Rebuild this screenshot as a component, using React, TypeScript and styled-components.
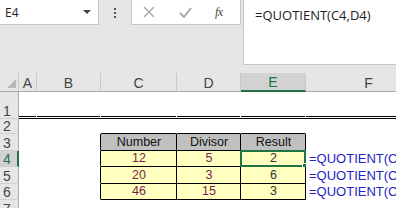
import React from 'react'
import styled, { createGlobalStyle } from 'styled-components'

const GlobalStyle = createGlobalStyle`
  html, body {
    margin: 0;
    padding: 0;
    overflow: hidden;
    background: #fff;
  }
  body {
    width: 396px;
    height: 208px;
    font-family: "Liberation Sans", Arial, sans-serif;
  }
`

const COLS = [
  { key: 'A', width: '18px' },
  { key: 'B', width: '64px' },
  { key: 'C', width: '76px' },
  { key: 'D', width: '64px' },
  { key: 'E', width: '65px' },
  { key: 'F', width: '1fr' },
]

const ROW_HEIGHTS = [27, 15, 17, 16, 17, 16, 17]

const MAROON = '#7a1f4c'
const TABLE = [
  ['Number', 'Divisor', 'Result'],
  ['12', '5', '2'],
  ['20', '3', '6'],
  ['46', '15', '3'],
]

// ---- toolbar ----
const Toolbar = styled.div`
  display: flex;
  align-items: flex-start;
  height: 73px;
  background: #e6e6e6;
`

const NameBox = styled.div`
  width: 99px;
  height: 25px;
  box-sizing: border-box;
  background: #fff;
  border-right: 1px solid #c6c6c6;
  border-bottom: 1px solid #c6c6c6;
  display: flex;
  align-items: center;
  justify-content: space-between;
  padding: 0 7px 0 5px;
  font-family: "Open Sans", "Noto Sans", sans-serif;
  font-size: 12px;
  color: #222;
`

const DropArrow = styled.span`
  width: 0;
  height: 0;
  border-left: 4px solid transparent;
  border-right: 4px solid transparent;
  border-top: 4px solid #444;
`

const Grip = styled.div`
  width: 32px;
  height: 25px;
  display: flex;
  flex-direction: column;
  align-items: center;
  justify-content: center;
  gap: 2px;
  i {
    width: 2px;
    height: 2px;
    background: #555;
  }
`

const FxBox = styled.div`
  width: 110px;
  height: 25px;
  box-sizing: border-box;
  background: #fff;
  border: 1px solid #c6c6c6;
  border-top: none;
  display: flex;
  align-items: center;
  padding-left: 11px;
`

const FxButton = styled.span<{ $w: number }>`
  width: ${p => p.$w}px;
  display: flex;
  align-items: center;
`

const FxLabel = styled.span`
  font-family: "Liberation Serif", serif;
  font-style: italic;
  font-size: 12px;
  color: #444;
  letter-spacing: -0.5px;
`

const FormulaInput = styled.div`
  flex: 1;
  height: 65px;
  margin-left: 2px;
  box-sizing: border-box;
  background: #fff;
  border-left: 1px solid #c6c6c6;
  border-bottom: 1px solid #c6c6c6;
  padding: 6px 0 0 11px;
  font-family: "Open Sans", "Noto Sans", sans-serif;
  font-size: 13px;
  color: #222;
  white-space: nowrap;
`

// ---- sheet ----
const Sheet = styled.div`
  display: grid;
  grid-template-columns: 19px ${COLS.map(c => c.width).join(' ')};
  grid-template-rows: 19px ${ROW_HEIGHTS.map(h => h + 'px').join(' ')};
`

const Corner = styled.div`
  background: #e6e6e6;
  border-right: 1px solid #c8c8c8;
  border-bottom: 1px solid #ababab;
  box-sizing: border-box;
  display: flex;
  align-items: flex-end;
  justify-content: flex-end;
  padding: 0 2px 3px 0;
  &::after {
    content: '';
    width: 0;
    height: 0;
    border-left: 9px solid transparent;
    border-bottom: 9px solid #b7b7b7;
  }
`

const ColHead = styled.div<{ $active?: boolean }>`
  box-sizing: border-box;
  background: ${p => (p.$active ? '#d2d2d2' : '#e6e6e6')};
  border-right: 1px solid #c8c8c8;
  border-bottom: ${p => (p.$active ? '2px solid #217346' : '1px solid #ababab')};
  display: flex;
  align-items: center;
  justify-content: center;
  font-size: 14px;
  color: ${p => (p.$active ? '#217346' : '#444')};
  padding-top: 1px;
`

const RowHead = styled.div<{ $active?: boolean }>`
  box-sizing: border-box;
  background: ${p => (p.$active ? '#d2d2d2' : '#e6e6e6')};
  border-right: ${p => (p.$active ? '2px solid #217346' : '1px solid #ababab')};
  border-bottom: 1px solid #cfcfcf;
  display: flex;
  align-items: flex-end;
  padding: 0 0 0 3px;
  font-size: 14px;
  line-height: 14px;
  color: ${p => (p.$active ? '#217346' : '#444')};
  overflow: hidden;
`

const Cell = styled.div<{
  $bg?: string
  $color?: string
  $align?: string
  $rb?: string
  $bb?: string
  $double?: boolean
  $size?: number
}>`
  position: relative;
  box-sizing: border-box;
  background: ${p => p.$bg || '#fff'};
  color: ${p => p.$color || '#000'};
  border-right: 1px solid ${p => p.$rb || 'transparent'};
  border-bottom: ${p => (p.$double ? '3px double #000' : `1px solid ${p.$bb || 'transparent'}`)};
  display: flex;
  align-items: flex-end;
  justify-content: ${p => p.$align || 'flex-start'};
  padding: 0 2px 0 3px;
  font-size: ${p => p.$size || 12.5}px;
  line-height: 15px;
  white-space: nowrap;
  overflow: visible;
`

const Selection = styled.div`
  position: absolute;
  left: -1px;
  top: -1px;
  right: -1px;
  bottom: -1px;
  border: 2px solid #217346;
  pointer-events: none;
  &::after {
    content: '';
    position: absolute;
    right: -5px;
    bottom: -5px;
    width: 5px;
    height: 5px;
    background: #217346;
    border: 1px solid #fff;
  }
`

const SheetWrap = styled.div`
  overflow: hidden;
  height: 135px;
`

function cellProps(row: number, col: number) {
  // row: 1-based sheet row, col: 0-based index into COLS
  const inTableCol = col >= 2 && col <= 4
  const inTableRow = row >= 3 && row <= 6
  const props: any = {}
  if (row === 1) props.$double = true
  if (inTableCol && inTableRow) {
    props.$rb = '#000'
    props.$bb = '#000'
    props.$align = 'center'
    props.$bg = row === 3 ? '#c0c0c0' : '#ffffc0'
    props.$color = row === 3 ? '#111' : col === 4 ? '#333' : MAROON
  }
  if (inTableCol && row === 2) props.$bb = '#000'
  if (col === 1 && inTableRow) props.$rb = '#000'
  if (col === 5 && row >= 4 && row <= 6) {
    props.$color = '#2424c8'
    props.$size = 13
  }
  return props
}

function cellText(row: number, col: number) {
  if (col >= 2 && col <= 4 && row >= 3 && row <= 6) return TABLE[row - 3][col - 2]
  if (col === 5 && row >= 4 && row <= 6) return `=QUOTIENT(C${row},D${row})`
  return ''
}

const App: React.FC = () => {
  return (
    <>
      <GlobalStyle />
      <Toolbar>
        <NameBox>
          E4
          <DropArrow />
        </NameBox>
        <Grip>
          <i />
          <i />
          <i />
        </Grip>
        <FxBox>
          <FxButton $w={36}>
            <svg width="12" height="12" viewBox="0 0 12 12">
              <path d="M1 1 L11 11 M11 1 L1 11" stroke="#a6a6a6" strokeWidth="1.3" fill="none" />
            </svg>
          </FxButton>
          <FxButton $w={36}>
            <svg width="13" height="11" viewBox="0 0 13 11">
              <path d="M1 6 L5 10 L12 1" stroke="#a6a6a6" strokeWidth="1.8" fill="none" />
            </svg>
          </FxButton>
          <FxLabel>fx</FxLabel>
        </FxBox>
        <FormulaInput>=QUOTIENT(C4,D4)</FormulaInput>
      </Toolbar>
      <SheetWrap>
        <Sheet>
          <Corner />
          {COLS.map((c, i) => (
            <ColHead key={c.key} $active={i === 4}>
              {c.key}
            </ColHead>
          ))}
          {ROW_HEIGHTS.map((_, r) => {
            const row = r + 1
            return (
              <React.Fragment key={row}>
                <RowHead $active={row === 4}>{row}</RowHead>
                {COLS.map((c, col) => (
                  <Cell key={c.key} {...cellProps(row, col)}>
                    {cellText(row, col)}
                    {row === 4 && col === 4 && <Selection />}
                  </Cell>
                ))}
              </React.Fragment>
            )
          })}
        </Sheet>
      </SheetWrap>
    </>
  )
}

export default App
